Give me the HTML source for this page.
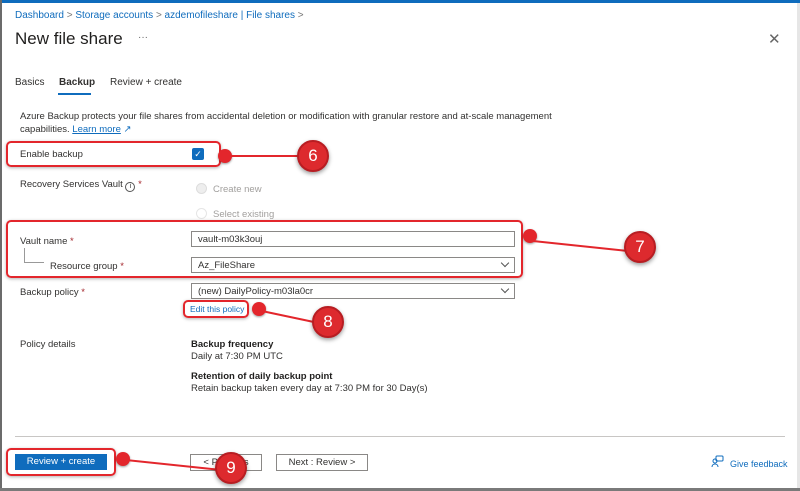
<!DOCTYPE html>
<html><head><meta charset="utf-8"><style>
*{margin:0;padding:0;box-sizing:border-box}
body{width:800px;height:491px;position:relative;background:#fff;font-family:"Liberation Sans",sans-serif;color:#323130;overflow:hidden;font-size:9.5px}
.a{position:absolute;white-space:nowrap}
.in{position:absolute;border:1px solid #8a8886;height:16px;padding-left:6px;line-height:15px;font-size:9.5px;background:#fff}
.chev{position:absolute;right:6px;top:2px;width:6px;height:6px;border-right:1px solid #555;border-bottom:1px solid #555;transform:rotate(45deg)}
.red{position:absolute;border:2px solid #e3262c;border-radius:5px;box-shadow:0 1px 3px rgba(0,0,0,.3)}
.dot{position:absolute;width:14px;height:14px;border-radius:50%;background:#e3262c;box-shadow:0 1px 2px rgba(0,0,0,.4)}
.num{position:absolute;width:32px;height:32px;border-radius:50%;background:#dd2a2e;border:2px solid #b81d22;color:#fff;font-size:17px;text-align:center;line-height:28px;box-shadow:0 2px 4px rgba(0,0,0,.4)}
.btn{position:absolute;border:1px solid #8a8886;height:17px;text-align:center;line-height:16px;font-size:9.5px;background:#fff}
</style></head><body>
<div class="a" style="left:0;top:0;width:800px;height:3px;background:#0f6cbd"></div>
<div class="a" style="left:0;top:0;width:2px;height:491px;background:#6b6b6b"></div>
<div class="a" style="left:797px;top:3px;width:3px;height:488px;background:#e6e6e6"></div>
<div class="a" style="left:0;top:488px;width:800px;height:3px;background:#7a7a7a"></div>

<div class="a" style="left:15px;top:10px;font-size:10px;color:#0f6cbd">Dashboard <span style="color:#777">&gt;</span> Storage accounts <span style="color:#777">&gt;</span> azdemofileshare | File shares <span style="color:#777">&gt;</span></div>
<div class="a" style="left:15px;top:29px;font-size:17px;color:#201f1e">New file share</div>
<div class="a" style="left:138px;top:32px;font-size:10px;color:#666">···</div>
<div class="a" style="left:768px;top:30px;font-size:15px;color:#666">✕</div>

<div class="a" style="left:15px;top:77px;font-size:10px">Basics</div>
<div class="a" style="left:59px;top:77px;font-size:10px;font-weight:bold">Backup</div>
<div class="a" style="left:58px;top:93px;width:33px;height:2px;background:#0f6cbd"></div>
<div class="a" style="left:110px;top:77px;font-size:10px">Review + create</div>

<div class="a" style="left:20px;top:110px;font-size:9.5px;line-height:13px">Azure Backup protects your file shares from accidental deletion or modification with granular restore and at-scale management<br>capabilities. <span style="color:#0f6cbd;text-decoration:underline">Learn more</span> <span style="color:#0f6cbd">↗</span></div>

<div class="red" style="left:6px;top:141px;width:215px;height:26px"></div>
<div class="a" style="left:20px;top:149px">Enable backup</div>
<div class="a" style="left:192px;top:148px;width:12px;height:12px;background:#0f6cbd;border-radius:2px;color:#fff;font-size:9px;text-align:center;line-height:12px">✓</div>
<div class="dot" style="left:218px;top:149px"></div>
<div class="a" style="left:228px;top:155px;width:75px;height:2px;background:#e3262c"></div>
<div class="num" style="left:297px;top:140px">6</div>

<div class="a" style="left:20px;top:179px">Recovery Services Vault <span style="display:inline-block;width:10px;height:10px;border:1px solid #555;border-radius:50%;font-size:7px;text-align:center;line-height:8px;vertical-align:-1px">i</span> <span style="color:#a4262c">*</span></div>
<div class="a" style="left:196px;top:183px;width:11px;height:11px;border-radius:50%;background:#eee;border:1px solid #ddd"></div>
<div class="a" style="left:213px;top:184px;color:#a19f9d">Create new</div>
<div class="a" style="left:196px;top:208px;width:11px;height:11px;border-radius:50%;border:1px solid #e5e5e5"></div>
<div class="a" style="left:213px;top:209px;color:#a19f9d">Select existing</div>

<div class="red" style="left:6px;top:220px;width:517px;height:58px"></div>
<div class="a" style="left:20px;top:236px">Vault name <span style="color:#a4262c">*</span></div>
<div class="in" style="left:191px;top:231px;width:324px">vault-m03k3ouj</div>
<div class="a" style="left:24px;top:248px;width:1px;height:15px;background:#999"></div>
<div class="a" style="left:24px;top:262px;width:20px;height:1px;background:#999"></div>
<div class="a" style="left:50px;top:261px">Resource group <span style="color:#a4262c">*</span></div>
<div class="in" style="left:191px;top:257px;width:324px">Az_FileShare<span class="chev"></span></div>
<div class="dot" style="left:523px;top:229px"></div>
<div class="a" style="left:533px;top:240px;width:98px;height:2px;background:#e3262c;transform:rotate(6deg);transform-origin:0 0"></div>
<div class="num" style="left:624px;top:231px">7</div>

<div class="a" style="left:20px;top:287px">Backup policy <span style="color:#a4262c">*</span></div>
<div class="in" style="left:191px;top:283px;width:324px">(new) DailyPolicy-m03la0cr<span class="chev"></span></div>
<div class="red" style="left:183px;top:300px;width:66px;height:18px"></div>
<div class="a" style="left:190px;top:304px;color:#0f6cbd;font-size:8.5px">Edit this policy</div>
<div class="dot" style="left:252px;top:302px"></div>
<div class="a" style="left:262px;top:310px;width:58px;height:2px;background:#e3262c;transform:rotate(12deg);transform-origin:0 0"></div>
<div class="num" style="left:312px;top:306px">8</div>

<div class="a" style="left:20px;top:339px">Policy details</div>
<div class="a" style="left:191px;top:339px;font-weight:bold;color:#201f1e">Backup frequency</div>
<div class="a" style="left:191px;top:351px">Daily at 7:30 PM UTC</div>
<div class="a" style="left:191px;top:371px;font-weight:bold;color:#201f1e">Retention of daily backup point</div>
<div class="a" style="left:191px;top:383px">Retain backup taken every day at 7:30 PM for 30 Day(s)</div>

<div class="a" style="left:15px;top:436px;width:770px;height:1px;background:#c8c6c4"></div>
<div class="red" style="left:6px;top:448px;width:110px;height:28px"></div>
<div class="a" style="left:15px;top:454px;width:92px;height:16px;background:#0f6cbd;color:#fff;text-align:center;line-height:16px;font-size:9.5px">Review + create</div>
<div class="btn" style="left:190px;top:454px;width:72px">&lt; Previous</div>
<div class="btn" style="left:276px;top:454px;width:92px">Next : Review &gt;</div>
<div class="dot" style="left:116px;top:452px"></div>
<div class="a" style="left:126px;top:459px;width:96px;height:2px;background:#e3262c;transform:rotate(6deg);transform-origin:0 0"></div>
<div class="num" style="left:215px;top:452px">9</div>
<svg class="a" style="left:711px;top:455px" width="13" height="13" viewBox="0 0 13 13" fill="none" stroke="#0f6cbd" stroke-width="1"><rect x="5" y="1" width="7" height="5" rx="1"/><circle cx="4" cy="6" r="2"/><path d="M1 12c0-2 1.5-3 3-3s3 1 3 3"/></svg>
<div class="a" style="left:730px;top:459px;color:#0f6cbd;font-size:9px">Give feedback</div>
</body></html>
